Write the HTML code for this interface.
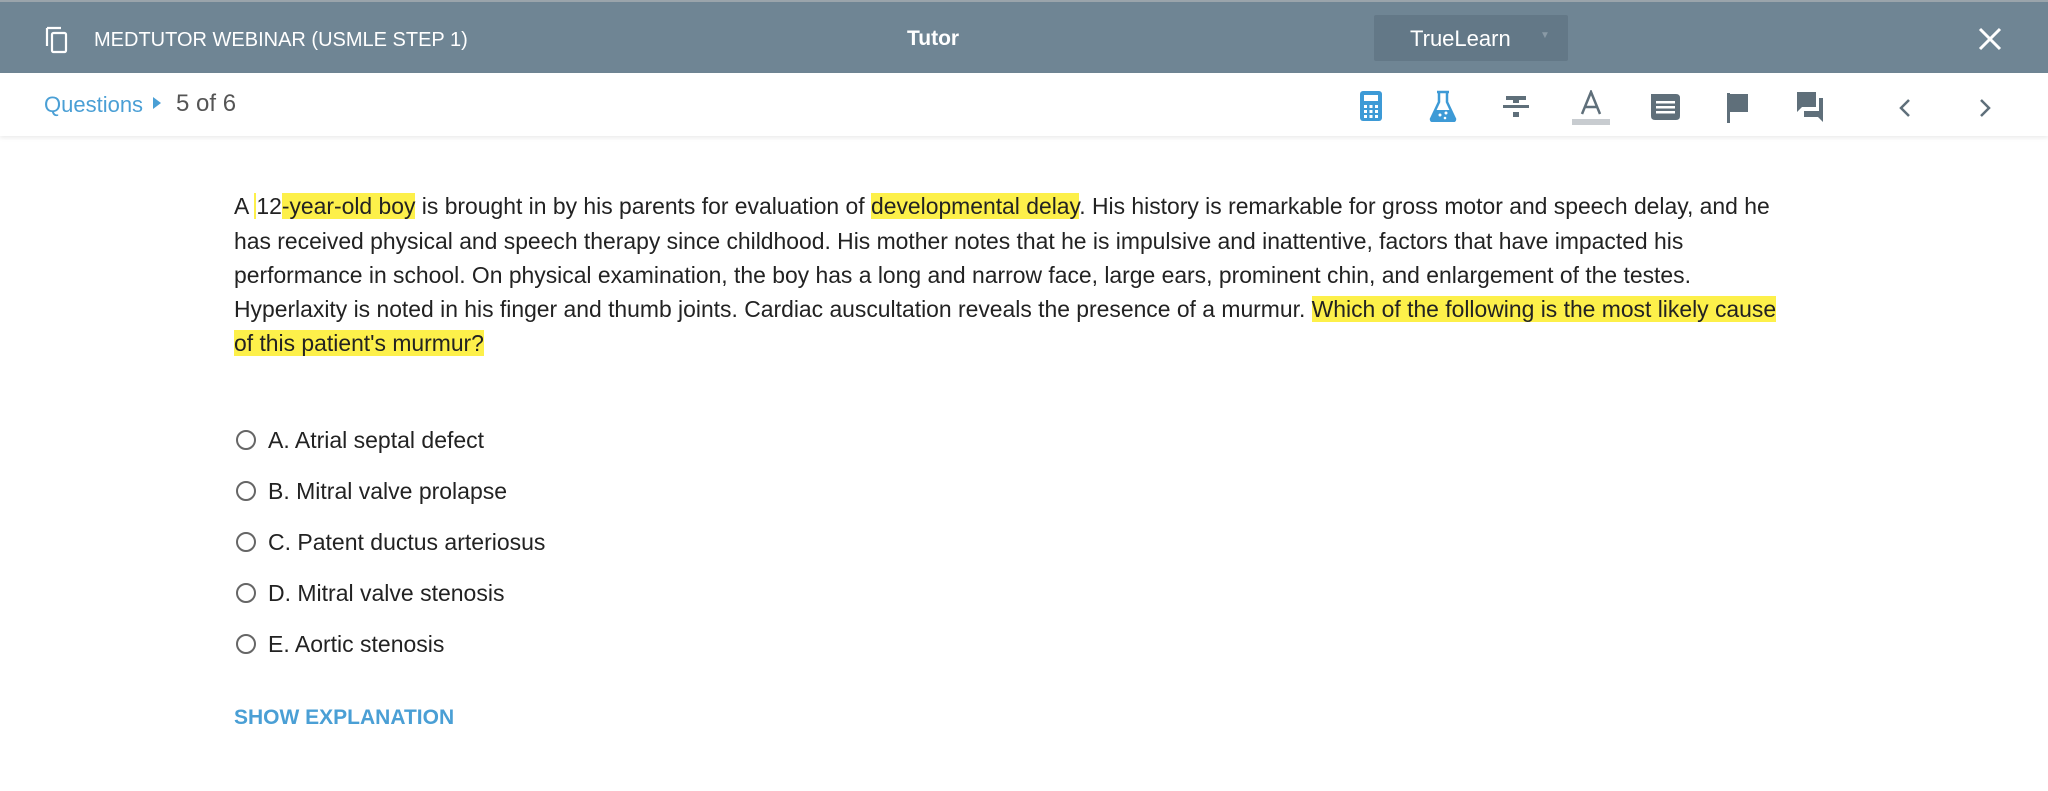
<!DOCTYPE html>
<html><head><meta charset="utf-8"><style>
*{margin:0;padding:0;box-sizing:border-box}
body{width:2048px;height:791px;background:#fff;font-family:"Liberation Sans",sans-serif;position:relative;overflow:hidden}
.hdr{position:absolute;left:0;top:0;width:2048px;height:73px;background:#6f8594;border-top:2px solid #9aa4ab}
.abs{position:absolute}
.sub{position:absolute;left:0;top:73px;width:2048px;height:63px;background:#fff;box-shadow:0 2px 4px rgba(0,0,0,.08)}
.q{position:absolute;left:234px;font-size:22.9px;color:#222;white-space:nowrap;line-height:32px}
.hl{background:#fdf04a}
.opt{position:absolute;left:236px;font-size:23px;color:#222;display:flex;align-items:center;line-height:30px}
.opt i{display:inline-block;width:20px;height:20px;border:2px solid #666;border-radius:50%;margin-right:12px}
</style></head><body>
<div class="hdr">
 <svg class="abs" style="left:45px;top:24px" width="26" height="28" viewBox="0 0 26 28"><path d="M2 2v18M2 2h14" stroke="#fff" stroke-width="2.2" fill="none"/><rect x="7" y="7" width="14" height="19" rx="1.5" stroke="#fff" stroke-width="2.2" fill="none"/></svg>
 <div class="abs" style="left:94px;top:27px;font-size:20px;color:#fff">MEDTUTOR WEBINAR (USMLE STEP 1)</div>
 <div class="abs" style="left:907px;top:25px;font-size:21px;color:#fff;font-weight:bold">Tutor</div>
 <div class="abs" style="left:1374px;top:13px;width:194px;height:46px;background:#637887;border-radius:2px"></div>
 <div class="abs" style="left:1410px;top:24px;font-size:22px;color:#fff">TrueLearn</div>
 <div class="abs" style="left:1540px;top:28px;font-size:10px;color:#8a9aa6">▼</div>
 <svg class="abs" style="left:1977px;top:24px" width="26" height="26" viewBox="0 0 26 26"><path d="M3 3L23 23M23 3L3 23" stroke="#fff" stroke-width="3"/></svg>
</div>
<div class="sub">
 <div class="abs" style="left:44px;top:19px;font-size:22px;color:#4a9fd5">Questions</div>
 <div class="abs" style="left:153px;top:24px;width:0;height:0;border-left:8px solid #4a9fd5;border-top:6px solid transparent;border-bottom:6px solid transparent"></div>
 <div class="abs" style="left:176px;top:17px;font-size:24px;color:#555">5 of 6</div>
 <svg class="abs" style="left:1359px;top:17px" width="24" height="32" viewBox="0 0 24 32"><rect x="1" y="1" width="22" height="30" rx="3" fill="#3d9ad6"/><rect x="5" y="5" width="14" height="6" fill="#fff"/><g fill="#fff"><rect x="5" y="15" width="3" height="3"/><rect x="10.5" y="15" width="3" height="3"/><rect x="16" y="15" width="3" height="3"/><rect x="5" y="20" width="3" height="3"/><rect x="10.5" y="20" width="3" height="3"/><rect x="16" y="20" width="3" height="3"/><rect x="5" y="25" width="3" height="3"/><rect x="10.5" y="25" width="3" height="3"/><rect x="16" y="25" width="3" height="3"/></g></svg>
 <svg class="abs" style="left:1429px;top:17px" width="28" height="32" viewBox="0 0 28 32"><path d="M8 2h12M10 2v10L2 29q0 2 2 2h20q2 0 2-2L18 12V2" fill="none" stroke="#3d9ad6" stroke-width="2.5"/><path d="M6 20h16l4 9q0 2-2 2H4q-2 0-2-2z" fill="#3d9ad6"/><circle cx="11" cy="25" r="1.5" fill="#fff"/><circle cx="17" cy="23" r="1.5" fill="#fff"/><circle cx="16" cy="28" r="1.3" fill="#fff"/></svg>
 <svg class="abs" style="left:1502px;top:20px" width="28" height="28" viewBox="0 0 28 28"><path d="M4 3h20v4h-7v3h-6V7H4z" fill="#5f6f7a"/><rect x="1" y="12" width="26" height="3" fill="#5f6f7a"/><rect x="11" y="19" width="6" height="5" fill="#5f6f7a"/></svg>
 <svg class="abs" style="left:1572px;top:17px" width="38" height="38" viewBox="0 0 38 38"><path d="M10 24L19 2L28 24M13 17h12" fill="none" stroke="#5f6f7a" stroke-width="2.5"/><rect x="0" y="29" width="38" height="6" fill="#c8ccd0"/></svg>
 <svg class="abs" style="left:1651px;top:21px" width="29" height="26" viewBox="0 0 29 26"><path d="M0 0h25q4 0 4 4v18q0 4-4 4H4q-4 0-4-4z" fill="#5f6f7a"/><rect x="5" y="7" width="19" height="2.5" fill="#fff"/><rect x="5" y="12" width="19" height="2.5" fill="#fff"/><rect x="5" y="17" width="19" height="2.5" fill="#fff"/></svg>
 <svg class="abs" style="left:1727px;top:20px" width="22" height="30" viewBox="0 0 22 30"><rect x="0" y="0" width="3" height="30" fill="#5f6f7a"/><rect x="3" y="1" width="18" height="18" fill="#5f6f7a"/></svg>
 <svg class="abs" style="left:1797px;top:19px" width="28" height="30" viewBox="0 0 28 30"><path d="M0 0h19v15H5l-5 5z" fill="#5f6f7a"/><path d="M22 6h4v24l-5-5H7v-6h15z" fill="#5f6f7a"/></svg>
 <svg class="abs" style="left:1898px;top:25px" width="14" height="20" viewBox="0 0 14 20"><path d="M11 2L3 10l8 8" fill="none" stroke="#5f6f7a" stroke-width="2.5"/></svg>
 <svg class="abs" style="left:1978px;top:25px" width="14" height="20" viewBox="0 0 14 20"><path d="M3 2l8 8-8 8" fill="none" stroke="#5f6f7a" stroke-width="2.5"/></svg>
</div>
<div class="q" style="top:190px">A <span class="hl" style="padding-left:2px"></span>12<span class="hl">-year-old boy</span> is brought in by his parents for evaluation of <span class="hl">developmental delay</span>. His history is remarkable for gross motor and speech delay, and he</div>
<div class="q" style="top:225px">has received physical and speech therapy since childhood. His mother notes that he is impulsive and inattentive, factors that have impacted his</div>
<div class="q" style="top:259px">performance in school. On physical examination, the boy has a long and narrow face, large ears, prominent chin, and enlargement of the testes.</div>
<div class="q" style="top:293px">Hyperlaxity is noted in his finger and thumb joints. Cardiac auscultation reveals the presence of a murmur. <span class="hl">Which of the following is the most likely cause</span></div>
<div class="q" style="top:327px"><span class="hl">of this patient's murmur?</span></div>
<div class="opt" style="top:425px"><i></i>A. Atrial septal defect</div>
<div class="opt" style="top:476px"><i></i>B. Mitral valve prolapse</div>
<div class="opt" style="top:527px"><i></i>C. Patent ductus arteriosus</div>
<div class="opt" style="top:578px"><i></i>D. Mitral valve stenosis</div>
<div class="opt" style="top:629px"><i></i>E. Aortic stenosis</div>
<div class="abs" style="left:234px;top:706px;font-size:21px;font-weight:bold;color:#4a9fd5">SHOW EXPLANATION</div>
</body></html>
